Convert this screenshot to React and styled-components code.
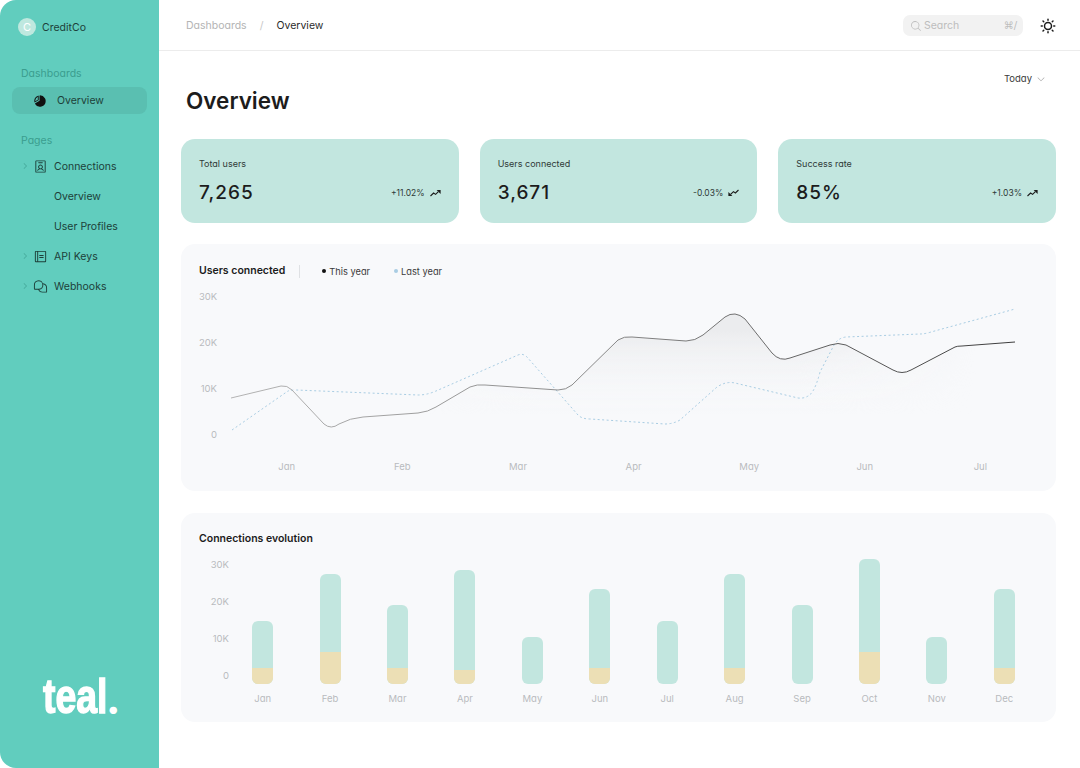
import React from "react"
import styled, { createGlobalStyle } from "styled-components"
import {
  PiCaretDown,
  PiCaretRight,
  PiChartPieSliceFill,
  PiChatsTeardrop,
  PiIdentificationBadge,
  PiMagnifyingGlass,
  PiNotebook,
  PiSunBold,
} from "react-icons/pi"

const GlobalStyle = createGlobalStyle`
  html, body {
    margin: 0;
    background: #fff;
  }
  body {
    font-family: Inter, "Liberation Sans", sans-serif;
    font-feature-settings: "cv11" 1;
    color: #1c1c1c;
  }
`

const Page = styled.div`
  width: 1080px;
  height: 768px;
  display: grid;
  grid-template-columns: 159px 1fr;
  overflow: hidden;
`

const Sidebar = styled.aside`
  background: #61cdbe;
  border-radius: 16px 0 0 16px;
  display: flex;
  flex-direction: column;
  padding: 18px 12px 0;
  box-sizing: border-box;
  height: 768px;
  color: #1d3f39;
  font-size: 10.5px;
`

const Brand = styled.div`
  display: flex;
  align-items: center;
  gap: 6px;
  padding-left: 6px;
  height: 18px;
`

const BrandMark = styled.span`
  width: 18px;
  height: 18px;
  border-radius: 50%;
  background: #bfe8df;
  color: #fff;
  font-size: 11px;
  display: flex;
  align-items: center;
  justify-content: center;
`

const SectionLabel = styled.div`
  color: #3b9d8f;
  line-height: 14px;
  padding-left: 9px;
  margin-top: ${(p) => p.$top}px;
  margin-bottom: ${(p) => p.$bottom}px;
`

const ActiveItem = styled.div`
  height: 27px;
  background: #5abfb1;
  border-radius: 8px;
  display: flex;
  align-items: center;
  gap: 10px;
  padding-left: 21px;
`

const NavRow = styled.div`
  height: 30px;
  display: flex;
  align-items: center;
  padding-left: ${(p) => (p.$sub ? 42 : 9)}px;

  > svg:first-child {
    color: #3b9d8f;
    margin-right: 4px;
  }
  > svg:nth-child(2) {
    margin-right: 6px;
  }
`

const Logo = styled.div`
  margin-top: auto;
  margin-bottom: 51px;
  padding-left: 31px;
  display: flex;
  align-items: flex-end;
  color: #fff;
  font-family: "Liberation Sans", sans-serif;
  font-feature-settings: normal;
  font-weight: 700;
  font-size: 48px;
  line-height: 40px;
`

const LogoWord = styled.span`
  display: inline-block;
  transform: scaleX(0.78);
  transform-origin: left bottom;
  margin-right: -18px;
  -webkit-text-stroke: 1.4px #fff;
`

const LogoDot = styled.span`
  font-family: Lato, sans-serif;
  font-weight: 900;
  font-size: 46px;
  line-height: 40px;
`

const Main = styled.main`
  display: flex;
  flex-direction: column;
  min-width: 0;
`

const TopBar = styled.header`
  height: 51px;
  box-sizing: border-box;
  border-bottom: 1px solid #ececec;
  display: flex;
  align-items: center;
  padding: 1px 24px 0 27px;
  font-size: 10.5px;
`

const Crumb = styled.span`
  color: ${(p) => (p.$current ? "#2b2b2b" : "#b4b4b4")};
`

const CrumbSlash = styled.span`
  color: #c8c8c8;
  margin: 0 13px;
`

const Search = styled.div`
  margin-left: auto;
  width: 120px;
  height: 21px;
  box-sizing: border-box;
  background: #f2f2f2;
  border-radius: 7px;
  display: flex;
  align-items: center;
  gap: 2px;
  padding: 0 6px 0 7px;
  color: #bdbdbd;
`

const SearchKey = styled.span`
  margin-left: auto;
  font-family: "DejaVu Sans", sans-serif;
  font-size: 10px;
`

const ThemeButton = styled.span`
  display: flex;
  margin-left: 17px;
  color: #1c1c1c;
`

const Content = styled.div`
  padding: 0 24px 0 22px;
  display: flex;
  flex-direction: column;
`

const TitleRow = styled.div`
  position: relative;
  height: 88px;
  padding-left: 5px;
`

const Title = styled.h1`
  margin: 0;
  padding-top: 35px;
  font-size: 22.5px;
  line-height: 29px;
  font-weight: 600;
  color: #1c1c1c;
`

const RangeSelect = styled.div`
  position: absolute;
  right: 10px;
  top: 22px;
  display: flex;
  align-items: center;
  gap: 4px;
  font-size: 9.5px;
  line-height: 12px;
  color: #3a3a3a;

  svg {
    color: #a5a5a5;
  }
`

const Stats = styled.div`
  display: grid;
  grid-template-columns: repeat(3, 1fr);
  gap: 21px;
`

const StatCard = styled.div`
  height: 84px;
  box-sizing: border-box;
  background: #c2e6df;
  border-radius: 14px;
  padding: 19px 18px 0 18px;
`

const StatLabel = styled.div`
  font-size: 9px;
  line-height: 12px;
  color: #2f3a38;
`

const StatLine = styled.div`
  display: flex;
  align-items: center;
  justify-content: space-between;
  margin-top: 9.5px;
`

const StatValue = styled.div`
  font-size: 19px;
  line-height: 26px;
  font-weight: 500;
  letter-spacing: 1px;
  color: #1c1c1c;
`

const StatDelta = styled.div`
  display: flex;
  align-items: center;
  gap: 5px;
  font-size: 8.5px;
  color: #2f3a38;
`

const Panel = styled.section`
  margin-top: ${(p) => p.$top}px;
  height: ${(p) => p.$height}px;
  box-sizing: border-box;
  background: #f8f9fb;
  border-radius: 14px;
  padding: ${(p) => p.$pad}px 18px 0;
`

const PanelHead = styled.div`
  display: flex;
  align-items: center;
  height: 16px;
`

const PanelTitle = styled.h2`
  margin: 0;
  font-size: 10.5px;
  line-height: 16px;
  font-weight: 600;
  color: #1c1c1c;
`

const Legend = styled.div`
  display: flex;
  align-items: center;
  gap: 24px;
  margin-left: 14px;
  padding-left: 22px;
  border-left: 1px solid #dfe1e4;
  height: 13px;
`

const LegendItem = styled.span`
  display: flex;
  align-items: center;
  gap: 3px;
  font-size: 9.25px;
  color: #3a3a3a;
`

const LegendDot = styled.i`
  width: 4px;
  height: 4px;
  border-radius: 50%;
  background: ${(p) => p.$color};
`

const LineBody = styled.div`
  display: grid;
  grid-template-columns: 18px 1fr;
  margin-top: 12px;
`

const YAxis = styled.div`
  display: flex;
  flex-direction: column;
  justify-content: space-between;
  height: ${(p) => p.$height}px;
  text-align: right;
  white-space: nowrap;
`

const AxisText = styled.span`
  font-size: 9.5px;
  line-height: 12px;
  color: #b9bbbe;
`

const LineSvg = styled.svg`
  display: block;
  width: 821px;
  height: 150px;
`

const MonthRow = styled.div`
  display: grid;
  grid-template-columns: repeat(7, 115.6px);
  margin: 20px 0 0 30px;
  text-align: center;
`

const BarBody = styled.div`
  display: grid;
  grid-template-columns: 30px repeat(12, 1fr);
  margin-top: 12px;
`

const BarColumn = styled.div`
  display: flex;
  flex-direction: column;
  align-items: center;
  justify-content: flex-end;
  height: 146px;
`

const Bar = styled.div`
  width: 21px;
  border-radius: 6px;
  background: #c2e6df;
  overflow: hidden;
  display: flex;
  flex-direction: column;
  justify-content: flex-end;
  margin-bottom: 9px;
`

const BarFoot = styled.div`
  background: #ecdfb5;
`

const TrendSvg = styled.svg`
  display: block;
  transform: ${(p) => (p.$down ? "rotate(180deg)" : "none")};
`

const stats = [
  { label: "Total users", value: "7,265", delta: "+11.02%", up: true },
  { label: "Users connected", value: "3,671", delta: "-0.03%", up: false },
  { label: "Success rate", value: "85%", delta: "+1.03%", up: true },
]

const bars = [
  { month: "Jan", height: 63, foot: 16 },
  { month: "Feb", height: 110, foot: 32 },
  { month: "Mar", height: 79, foot: 16 },
  { month: "Apr", height: 114, foot: 14 },
  { month: "May", height: 47, foot: 0 },
  { month: "Jun", height: 95, foot: 16 },
  { month: "Jul", height: 63, foot: 0 },
  { month: "Aug", height: 110, foot: 16 },
  { month: "Sep", height: 79, foot: 0 },
  { month: "Oct", height: 126, foot: 32 },
  { month: "Nov", height: 47, foot: 0 },
  { month: "Dec", height: 95, foot: 16 },
]

const lineMonths = ["Jan", "Feb", "Mar", "Apr", "May", "Jun", "Jul"]

const thisYear =
  "M231 398 L281 386 Q287 385 292 390 L324 424 Q331 430 339 424 Q350 418 363 417 L418 413 Q428 412 436 407 L470 387 Q477 384 485 385 L558 390 Q566 390 572 385 L618 340 Q624 336 632 337 L686 341 Q695 341 703 335 L725 317 Q735 310 745 319 L772 353 Q780 362 790 358 L830 345 Q838 342 846 345 L893 370 Q902 375 911 370 L955 347 Q957 346 962 346 L1015 342"
const lastYear =
  "M232 430 L288 391 Q291 390 296 390 L418 395 Q427 395 436 391 L518 355 Q523 353 527 357 L578 415 Q582 419 590 419 L665 424 Q673 424 680 420 L717 387 Q726 381 735 383 L798 398 Q808 399 813 391 Q817 384 820 372 L833 347 Q837 338 846 337 L920 334 Q925 334 931 332 L1015 309"

const TrendIcon = ({ down }) => (
  <TrendSvg $down={down} width="11" height="8" viewBox="0 0 11 8">
    <path d="M0.5 7 L3.6 4 L5.6 5.4 L8.4 2.6" fill="none" stroke="#1c1c1c" strokeWidth="1.1" />
    <path d="M6.6 1 H10.6 V5 Z" fill="#1c1c1c" />
  </TrendSvg>
)

const LineChart = () => (
  <LineSvg viewBox="217 291 821 150">
    <defs>
      <linearGradient id="area" gradientUnits="userSpaceOnUse" x1="0" y1="330" x2="0" y2="418">
        <stop offset="0" stopColor="#ebecee" />
        <stop offset="1" stopColor="#f8f9fb" stopOpacity="0" />
      </linearGradient>
      <linearGradient id="fade" gradientUnits="userSpaceOnUse" x1="231" y1="0" x2="1015" y2="0">
        <stop offset="0.2" stopColor="#000" />
        <stop offset="0.4" stopColor="#fff" />
        <stop offset="0.72" stopColor="#fff" />
        <stop offset="0.95" stopColor="#000" />
      </linearGradient>
      <mask id="fadeMask" maskUnits="userSpaceOnUse" x="217" y="291" width="821" height="150">
        <rect x="217" y="291" width="821" height="150" fill="url(#fade)" />
      </mask>
      <linearGradient id="stroke" gradientUnits="userSpaceOnUse" x1="231" y1="0" x2="1015" y2="0">
        <stop offset="0" stopColor="#b4b4b4" />
        <stop offset="0.5" stopColor="#858585" />
        <stop offset="1" stopColor="#3c3c3c" />
      </linearGradient>
    </defs>
    <path d={`${thisYear} L1015 430 L231 430 Z`} fill="url(#area)" mask="url(#fadeMask)" />
    <path d={lastYear} fill="none" stroke="#a9cde3" strokeWidth="1" strokeDasharray="2 2.5" />
    <path d={thisYear} fill="none" stroke="url(#stroke)" strokeWidth="1" />
  </LineSvg>
)

const App = () => (
  <Page>
    <GlobalStyle />
    <Sidebar>
      <Brand>
        <BrandMark>C</BrandMark>
        CreditCo
      </Brand>
      <SectionLabel $top={31} $bottom={6}>Dashboards</SectionLabel>
      <ActiveItem>
        <PiChartPieSliceFill size={14} color="#111" />
        Overview
      </ActiveItem>
      <SectionLabel $top={20} $bottom={3}>Pages</SectionLabel>
      <NavRow>
        <PiCaretRight size={8} />
        <PiIdentificationBadge size={15} />
        Connections
      </NavRow>
      <NavRow $sub>Overview</NavRow>
      <NavRow $sub>User Profiles</NavRow>
      <NavRow>
        <PiCaretRight size={8} />
        <PiNotebook size={15} />
        API Keys
      </NavRow>
      <NavRow>
        <PiCaretRight size={8} />
        <PiChatsTeardrop size={15} />
        Webhooks
      </NavRow>
      <Logo>
        <LogoWord>teal</LogoWord>
        <LogoDot>.</LogoDot>
      </Logo>
    </Sidebar>
    <Main>
      <TopBar>
        <Crumb>Dashboards</Crumb>
        <CrumbSlash>/</CrumbSlash>
        <Crumb $current>Overview</Crumb>
        <Search>
          <PiMagnifyingGlass size={12} />
          Search
          <SearchKey>⌘/</SearchKey>
        </Search>
        <ThemeButton>
          <PiSunBold size={16} />
        </ThemeButton>
      </TopBar>
      <Content>
        <TitleRow>
          <Title>Overview</Title>
          <RangeSelect>
            Today
            <PiCaretDown size={10} />
          </RangeSelect>
        </TitleRow>
        <Stats>
          {stats.map((s) => (
            <StatCard key={s.label}>
              <StatLabel>{s.label}</StatLabel>
              <StatLine>
                <StatValue>{s.value}</StatValue>
                <StatDelta>
                  {s.delta}
                  <TrendIcon down={!s.up} />
                </StatDelta>
              </StatLine>
            </StatCard>
          ))}
        </Stats>
        <Panel $top={21} $height={247} $pad={19}>
          <PanelHead>
            <PanelTitle>Users connected</PanelTitle>
            <Legend>
              <LegendItem>
                <LegendDot $color="#111" />
                This year
              </LegendItem>
              <LegendItem>
                <LegendDot $color="#a9cde3" />
                Last year
              </LegendItem>
            </Legend>
          </PanelHead>
          <LineBody>
            <YAxis $height={150}>
              <AxisText>30K</AxisText>
              <AxisText>20K</AxisText>
              <AxisText>10K</AxisText>
              <AxisText>0</AxisText>
            </YAxis>
            <LineChart />
          </LineBody>
          <MonthRow>
            {lineMonths.map((m) => (
              <AxisText key={m}>{m}</AxisText>
            ))}
          </MonthRow>
        </Panel>
        <Panel $top={22} $height={209} $pad={18}>
          <PanelHead>
            <PanelTitle>Connections evolution</PanelTitle>
          </PanelHead>
          <BarBody>
            <YAxis $height={123}>
              <AxisText>30K</AxisText>
              <AxisText>20K</AxisText>
              <AxisText>10K</AxisText>
              <AxisText>0</AxisText>
            </YAxis>
            {bars.map((b) => (
              <BarColumn key={b.month}>
                <Bar style={{ height: b.height }}>
                  {b.foot > 0 && <BarFoot style={{ height: b.foot }} />}
                </Bar>
                <AxisText>{b.month}</AxisText>
              </BarColumn>
            ))}
          </BarBody>
        </Panel>
      </Content>
    </Main>
  </Page>
)

export default App
